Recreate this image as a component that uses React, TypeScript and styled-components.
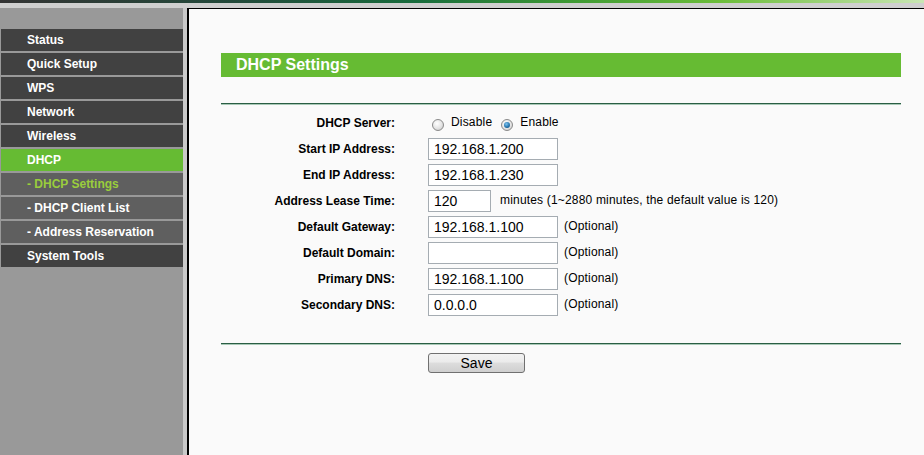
import { Fragment } from 'react';
import styled, { createGlobalStyle } from 'styled-components';

const GlobalStyle = createGlobalStyle`
  html, body {
    margin: 0;
    padding: 0;
    background: #fafafa;
    overflow: hidden;
  }
  * {
    box-sizing: border-box;
  }
`;

const Page = styled.div`
  display: flex;
  flex-direction: column;
  width: 924px;
  height: 455px;
  font-family: 'Liberation Sans', Arial, sans-serif;
`;

const TopStrip = styled.div`
  height: 3px;
  background: linear-gradient(90deg, #343434 0%, #22493a 25%, #176b3c 45%, #3f9a34 62%, #6cbd3a 78%, #c9e6b4 100%);
`;

const GrayBand = styled.div`
  height: 5px;
  background: #cfcfcf;
`;

const Body = styled.div`
  display: flex;
  flex: 1;
`;

const Sidebar = styled.nav`
  width: 187px;
  background: #999999;
  border-right: 4px solid #c9c9c9;
  padding-top: 21px;
  display: flex;
  flex-direction: column;
  gap: 2px;
`;

type ItemKind = 'top' | 'active' | 'sub' | 'subActive';

const itemBg: Record<ItemKind, string> = {
  top: '#414141',
  active: '#66bb33',
  sub: '#5f5f5f',
  subActive: '#5f5f5f',
};

const MenuItem = styled.div<{ $kind: ItemKind }>`
  height: 22px;
  margin-left: 1px;
  padding-left: 26px;
  display: flex;
  align-items: center;
  background: ${({ $kind }) => itemBg[$kind]};
  color: ${({ $kind }) => ($kind === 'subActive' ? '#9acd3c' : '#ffffff')};
  font-size: 12px;
  font-weight: bold;
  white-space: nowrap;
`;

const Content = styled.main`
  flex: 1;
  border-left: 2px solid #000;
  border-top: 1px solid #000;
  padding: 44px 0 0 32px;
`;

const Panel = styled.div`
  width: 680px;
`;

const TitleBar = styled.div`
  height: 24px;
  background: #66bb33;
  color: #fff;
  font-size: 16px;
  font-weight: bold;
  padding-left: 15px;
  display: flex;
  align-items: center;
`;

const Rule = styled.div<{ $top: number }>`
  margin-top: ${({ $top }) => $top}px;
  height: 2px;
  border-top: 1px solid #2a5e44;
  border-bottom: 1px solid #a9c9b7;
`;

const Form = styled.div`
  display: grid;
  grid-template-columns: 174px auto;
  column-gap: 33px;
  grid-auto-rows: 26px;
  padding-top: 5px;
`;

const Label = styled.div`
  display: flex;
  align-items: center;
  justify-content: flex-end;
  font-size: 12px;
  font-weight: bold;
  color: #000;
`;

const Field = styled.div`
  display: flex;
  align-items: center;
  font-size: 12px;
  color: #000;
  letter-spacing: 0.18px;
`;

const TextBox = styled.input<{ $w?: number }>`
  width: ${({ $w }) => $w ?? 130}px;
  height: 22px;
  border: 1px solid #a5acb2;
  background: #fff;
  padding: 0 0 0 5px;
  font-family: 'Liberation Sans', Arial, sans-serif;
  font-size: 14px;
  letter-spacing: 0;
  color: #000;
  outline: none;
`;

const Hint = styled.span<{ $gap?: number }>`
  margin-left: ${({ $gap }) => $gap ?? 6}px;
  margin-top: -3px;
  white-space: nowrap;
`;

const RadioDot = styled.span<{ $on?: boolean }>`
  width: 12px;
  height: 12px;
  border-radius: 50%;
  border: 1px solid #8a8a8a;
  background: radial-gradient(circle at 40% 35%, #ffffff 0%, #e4e4e4 55%, #c2c2c2 100%);
  display: inline-flex;
  align-items: center;
  justify-content: center;
  margin: 4px 7px 0 4px;

  &::after {
    content: '';
    display: ${({ $on }) => ($on ? 'block' : 'none')};
    width: 6px;
    height: 6px;
    border-radius: 50%;
    background: radial-gradient(circle at 40% 35%, #7fc4f0 0%, #1f6fa8 60%, #0c3d66 100%);
  }
`;

const RadioText = styled.span`
  margin-right: 5px;
  margin-top: -3px;
`;

const Footer = styled.div`
  padding: 8px 0 0 207px;
`;

const SaveButton = styled.button`
  width: 97px;
  height: 20px;
  border: 1px solid #707070;
  border-radius: 3px;
  background: linear-gradient(#f2f2f2 0%, #ebebeb 45%, #dddddd 50%, #cfcfcf 100%);
  font-family: 'Liberation Sans', Arial, sans-serif;
  font-size: 14px;
  color: #000;
  padding: 0;
  line-height: 18px;
`;

const menu: { label: string; kind: ItemKind }[] = [
  { label: 'Status', kind: 'top' },
  { label: 'Quick Setup', kind: 'top' },
  { label: 'WPS', kind: 'top' },
  { label: 'Network', kind: 'top' },
  { label: 'Wireless', kind: 'top' },
  { label: 'DHCP', kind: 'active' },
  { label: '- DHCP Settings', kind: 'subActive' },
  { label: '- DHCP Client List', kind: 'sub' },
  { label: '- Address Reservation', kind: 'sub' },
  { label: 'System Tools', kind: 'top' },
];

const fields = [
  { label: 'Start IP Address:', value: '192.168.1.200' },
  { label: 'End IP Address:', value: '192.168.1.230' },
  { label: 'Address Lease Time:', value: '120', width: 63, hint: 'minutes (1~2880 minutes, the default value is 120)', gap: 9 },
  { label: 'Default Gateway:', value: '192.168.1.100', hint: '(Optional)' },
  { label: 'Default Domain:', value: '', hint: '(Optional)' },
  { label: 'Primary DNS:', value: '192.168.1.100', hint: '(Optional)' },
  { label: 'Secondary DNS:', value: '0.0.0.0', hint: '(Optional)' },
];

export default function App() {
  return (
    <>
      <GlobalStyle />
      <Page>
        <TopStrip />
        <GrayBand />
        <Body>
          <Sidebar>
            {menu.map((m) => (
              <MenuItem key={m.label} $kind={m.kind}>
                {m.label}
              </MenuItem>
            ))}
          </Sidebar>
          <Content>
            <Panel>
              <TitleBar>DHCP Settings</TitleBar>
              <Rule $top={26} />
              <Form>
                <Label>DHCP Server:</Label>
                <Field>
                  <RadioDot />
                  <RadioText>Disable</RadioText>
                  <RadioDot $on />
                  <RadioText>Enable</RadioText>
                </Field>
                {fields.map((f) => (
                  <Fragment key={f.label}>
                    <Label>{f.label}</Label>
                    <Field>
                      <TextBox $w={f.width} defaultValue={f.value} />
                      {f.hint && <Hint $gap={f.gap}>{f.hint}</Hint>}
                    </Field>
                  </Fragment>
                ))}
              </Form>
              <Rule $top={25} />
              <Footer>
                <SaveButton>Save</SaveButton>
              </Footer>
            </Panel>
          </Content>
        </Body>
      </Page>
    </>
  );
}
